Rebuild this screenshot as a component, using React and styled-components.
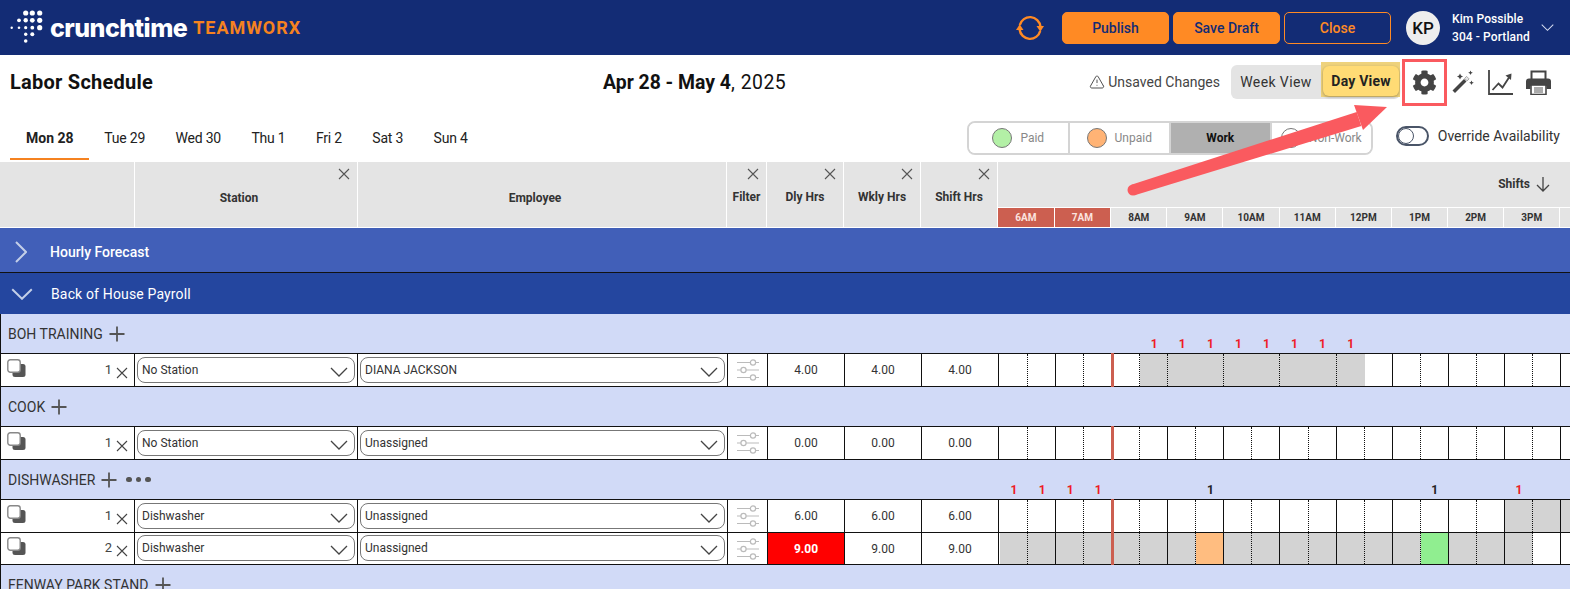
import React from 'react';
import styled, { createGlobalStyle } from 'styled-components';
import { FaCog } from 'react-icons/fa';
import { TriangleAlert } from 'lucide-react';

const GlobalStyle = createGlobalStyle`
  html, body {
    margin: 0;
    height: 589px;
    overflow: hidden;
    background: #fff;
    font-family: Roboto, "Liberation Sans", sans-serif;
  }
  * {
    box-sizing: border-box;
  }
`;

const Page = styled.div`
  position: relative;
  width: 1570px;
  height: 589px;
  overflow: hidden;
`;

const TopBar = styled.header`
  display: flex;
  align-items: center;
  height: 55px;
  background: #132c75;
  padding-left: 10px;
`;

const LogoWord = styled.span`
  margin-left: 4px;
  color: #fff;
  font-family: Inter, sans-serif;
  font-size: 25px;
  font-weight: 800;
  letter-spacing: -0.55px;
  line-height: 30px;
`;

const LogoProduct = styled.span`
  margin-left: 6px;
  color: #f58220;
  font-size: 18px;
  font-weight: 700;
  letter-spacing: 0.95px;
`;

const TopActions = styled.div`
  display: flex;
  align-items: center;
  margin-left: auto;
  padding-right: 16px;
`;

const SyncButton = styled.div`
  display: flex;
  margin-right: 14px;
`;

const ActionButton = styled.button`
  width: 107px;
  height: 32px;
  margin-left: 4px;
  border: 1px solid #ff8a24;
  border-radius: 5px;
  background: ${props => (props.$outline ? 'transparent' : '#ff8a24')};
  color: ${props => (props.$outline ? '#ff8a24' : '#132c75')};
  font-family: inherit;
  font-size: 14px;
  font-weight: 500;
`;

const Avatar = styled.div`
  display: flex;
  align-items: center;
  justify-content: center;
  width: 34px;
  height: 34px;
  margin-left: 15px;
  border-radius: 50%;
  background: #eee;
  color: #111;
  font-size: 17px;
  font-weight: 500;
`;

const UserText = styled.div`
  margin-left: 12px;
  width: 89px;
  color: #fff;
  font-size: 12px;
  font-weight: 500;
  letter-spacing: 0.1px;
  line-height: 18px;
`;

const TitleBar = styled.div`
  display: flex;
  align-items: center;
  height: 54px;
  padding: 0 19px 0 10px;
`;

const PageTitle = styled.h1`
  width: 593px;
  margin: 0;
  color: #111;
  font-size: 20px;
  font-weight: 700;
  letter-spacing: 0.25px;
`;

const DateRange = styled.div`
  color: #111;
  font-size: 19.4px;
  font-weight: 400;
  letter-spacing: 0.5px;

  b {
    font-weight: 700;
    letter-spacing: 0;
  }
`;

const Toolbar = styled.div`
  display: flex;
  align-items: center;
  margin-left: auto;
  color: #444;
`;

const Unsaved = styled.div`
  display: flex;
  align-items: center;
  gap: 3px;
  margin-right: 11px;
  color: #444;
  font-size: 14px;
`;

const ViewSwitch = styled.div`
  display: flex;
  height: 34px;
  border-radius: 6px;
  background: #e4e4e4;
`;

const WeekButton = styled.div`
  display: flex;
  align-items: center;
  justify-content: center;
  width: 90px;
  color: #333;
  font-size: 14px;
  letter-spacing: 0.4px;
`;

const DayFrame = styled.div`
  align-self: flex-start;
  width: 79px;
  height: 35px;
  margin-top: -3px;
  padding: 4px 1px 1px 2px;
  background: #eed27c;
`;

const DayButton = styled.div`
  display: flex;
  align-items: center;
  justify-content: center;
  height: 100%;
  border-radius: 6px;
  background: #ffdb75;
  box-shadow: 0 1px 3px rgba(0, 0, 0, 0.3);
  color: #222;
  font-size: 14px;
  font-weight: 700;
  letter-spacing: 0.2px;
`;

const GearBox = styled.div`
  display: flex;
  align-items: center;
  justify-content: center;
  width: 45px;
  height: 47px;
  margin-left: 2px;
  border: 3px solid #fa5a5f;
`;

const ToolIcon = styled.div`
  display: flex;
  margin-left: ${props => props.$gap}px;
`;

const TabBar = styled.div`
  display: flex;
  justify-content: space-between;
  height: 53px;
  padding: 8px 10px 0 10px;
`;

const Tabs = styled.nav`
  display: flex;
  height: 43px;
`;

const Tab = styled.div`
  display: flex;
  align-items: center;
  height: 43px;
  padding: ${props => (props.$active ? '0 15.5px 0 16px' : '0 15.2px')};
  border-bottom: 2px solid ${props => (props.$active ? '#f58220' : 'transparent')};
  color: #222;
  font-size: 14px;
  font-weight: ${props => (props.$active ? 700 : 400)};
  letter-spacing: ${props => (props.$active ? 0 : -0.2)}px;
`;

const FilterArea = styled.div`
  display: flex;
  align-items: flex-start;
  padding-top: 4px;
`;

const Legend = styled.div`
  display: flex;
  width: 406px;
  height: 34px;
  overflow: hidden;
  border: 2px solid #d4d4d4;
  border-radius: 8px;
`;

const LegendItem = styled.div`
  display: flex;
  flex: 1;
  align-items: center;
  justify-content: center;
  gap: 8px;
  border-right: 2px solid #d4d4d4;
  background: ${props => (props.$active ? '#b0b0b0' : '#fff')};
  color: ${props => (props.$active ? '#111' : '#888')};
  font-size: 12px;
  font-weight: ${props => (props.$active ? 700 : 400)};

  &:last-child {
    border-right: 0;
  }
`;

const LegendDot = styled.span`
  width: 20px;
  height: 20px;
  border: 1px solid #777;
  border-radius: 50%;
  background: ${props => props.$color};
`;

const OverrideToggle = styled.div`
  display: flex;
  align-items: center;
  margin: 5px 0 0 23px;
  color: #333;
  font-size: 14px;
`;

const ToggleTrack = styled.span`
  display: block;
  width: 33px;
  height: 20px;
  margin-right: 9px;
  border: 2px solid #4a5568;
  border-radius: 10px;
  background: #fff;
`;

const ToggleKnob = styled.span`
  display: block;
  width: 16px;
  height: 16px;
  border: 1.5px solid #4a5568;
  border-radius: 50%;
  background: #fff;
`;

const TableHead = styled.div`
  display: grid;
  grid-template-columns: 135px 223px 369px 40px 77px 77px 77px 1fr;
  height: 66px;
  border-bottom: 1px solid #fff;
  background: #e4e4e4;
`;

const HeadCell = styled.div`
  display: flex;
  flex-direction: column;
  align-items: center;
  border-right: 1px solid #fff;
`;

const HeadClose = styled.div`
  display: flex;
  align-self: flex-end;
  height: 12px;
  margin: 6px 7px 0 0;
`;

const HeadLabel = styled.div`
  margin-top: ${props => (props.$wide ? 11 : 10)}px;
  margin-right: ${props => (props.$wide ? 14 : 0)}px;
  color: #333;
  font-size: 12px;
  font-weight: 700;
  line-height: 14px;
  white-space: nowrap;
`;

const TimeHead = styled.div`
  display: flex;
  flex-direction: column;
  min-width: 0;
`;

const ShiftsLabel = styled.div`
  display: flex;
  align-items: center;
  justify-content: flex-end;
  gap: 6px;
  height: 45px;
  padding: 0 20px 2px 0;
  color: #333;
  font-size: 12px;
  font-weight: 700;
`;

const HourRow = styled.div`
  display: grid;
  grid-template-columns: 56.6px 56.6px repeat(9, 56.15px);
  height: 20px;
`;

const HourCell = styled.div`
  display: flex;
  align-items: center;
  justify-content: center;
  border-top: 1px solid #fff;
  border-right: 1px solid #fff;
  background: ${props => (props.$late ? '#cc5f50' : 'transparent')};
  color: ${props => (props.$late ? '#fbe3df' : '#333')};
  font-size: 10px;
  font-weight: 700;
`;

const SectionBar = styled.div`
  display: flex;
  align-items: center;
  height: ${props => (props.$open ? 41 : 45)}px;
  padding-left: ${props => (props.$open ? 11 : 15)}px;
  padding-top: ${props => (props.$open ? 0 : 3)}px;
  border-bottom: ${props => (props.$open ? 0 : '1px solid #111')};
  background: ${props => (props.$open ? '#24469f' : '#415fb8')};
  color: #fff;
  font-size: 14px;
  font-weight: ${props => (props.$open ? 400 : 500)};
  letter-spacing: ${props => (props.$open ? 0.15 : 0)}px;
`;

const SectionName = styled.span`
  margin-left: ${props => (props.$open ? 18 : 23)}px;
`;

const GroupRow = styled.div`
  display: grid;
  grid-template-columns: 999px 1fr;
  height: 39px;
  border-left: 1px solid #111;
  background: #d1daf7;
`;

const GroupName = styled.div`
  display: flex;
  align-items: center;
  gap: 6px;
  padding-left: 7px;
  color: #333;
  font-size: 14px;
`;

const GroupMore = styled.div`
  display: flex;
  gap: 4px;
  margin-left: 3px;
`;

const MoreDot = styled.span`
  width: 5.5px;
  height: 5.5px;
  border-radius: 50%;
  background: #555;
`;

const Timeline = styled.div`
  display: grid;
  grid-template-columns: repeat(21, 28.05px);
`;

const RowTimeline = styled(Timeline)`
  margin-left: 1px;
`;

const CountCell = styled.div`
  align-self: end;
  padding-bottom: 3px;
  color: ${props => (props.$over ? '#ee1c25' : '#222')};
  font-size: 12px;
  font-weight: 700;
  line-height: 12px;
  text-align: center;
`;

const ShiftRow = styled.div`
  display: grid;
  grid-template-columns: 135px 223px 370px 40px 77px 77px 77px 1fr;
  height: ${props => (props.$first ? 34 : 32)}px;
  border-top: ${props => (props.$first ? '1px solid #111' : 0)};
  border-bottom: 1px solid #111;
  background: #fff;
`;

const SeatCell = styled.div`
  display: flex;
  align-items: flex-start;
  padding: ${props => (props.$first ? 5 : 4)}px 6px 0 6px;
  border-left: 1px solid #111;
  border-right: 1px solid #111;
`;

const SeatNumber = styled.span`
  margin: 4px 4px 0 auto;
  color: #444;
  font-size: 13px;
  line-height: 14px;
`;

const SeatRemove = styled.span`
  display: flex;
  margin-top: 8px;
`;

const SelectCell = styled.div`
  padding: ${props => (props.$first ? 3 : 2)}px 2px 0;
  border-right: 1px solid #111;
`;

const SelectBox = styled.div`
  display: flex;
  align-items: center;
  justify-content: space-between;
  height: 26px;
  padding: 0 6px 0 4px;
  border: 1px solid #777;
  border-radius: 8px;
  color: #333;
  font-size: 12px;

  svg {
    margin-top: 3px;
  }
`;

const FilterCell = styled.div`
  display: flex;
  align-items: center;
  justify-content: center;
  border-right: 1px solid #111;
`;

const HoursCell = styled.div`
  display: flex;
  align-items: center;
  justify-content: center;
  border-right: 1px solid #111;
  background: ${props => (props.$alert ? '#ff0000' : 'transparent')};
  color: ${props => (props.$alert ? '#fff' : '#333')};
  font-size: 12px;
  font-weight: ${props => (props.$alert ? 700 : 400)};
`;

const fillColors = { grey: '#d3d3d3', orange: '#ffbd80', green: '#90ee90' };

const TimeCell = styled.div`
  position: relative;
  border-right: ${props => (props.$line === 'none' ? 0 : `1px ${props.$line} #111`)};
  background: ${props => fillColors[props.$fill] || 'transparent'};

  ${props => props.$now && `
    &::after {
      content: '';
      position: absolute;
      z-index: 1;
      top: -1px;
      right: -3px;
      bottom: -1px;
      width: 3px;
      background: #cc5f50;
    }
  `}
`;

const CalloutArrow = styled.svg`
  position: absolute;
  z-index: 2;
  top: 0;
  left: 0;
  pointer-events: none;
`;

const Close = ({ size = 12, color = '#555' }) => (
  <svg width={size} height={size} viewBox="0 0 12 12" fill="none" stroke={color} strokeWidth="1.1">
    <path d="M1 1l10 10M11 1L1 11" />
  </svg>
);

const Plus = () => (
  <svg width="16" height="16" viewBox="0 0 16 16" fill="none" stroke="#555" strokeWidth="1.8">
    <path d="M0.5 8h15M8 0.5v15" />
  </svg>
);

const ChevronDown = ({ width = 18, height = 10, color = '#444', weight = 1.3 }) => (
  <svg width={width} height={height} viewBox="0 0 18 10" fill="none" stroke={color} strokeWidth={weight} preserveAspectRatio="none">
    <path d="M1 1l8 8 8-8" />
  </svg>
);

const ChevronRight = () => (
  <svg width="12" height="22" viewBox="0 0 12 22" fill="none" stroke="#c3cfe8" strokeWidth="2">
    <path d="M1 1l10 10L1 21" />
  </svg>
);

const Logo = () => (
  <svg width="36" height="40" viewBox="0 0 36 40" fill="#fff">
    {[[15.7, 5, 2.6], [22.3, 5, 2.6], [29.7, 5, 2.6],
      [9, 12.3, 1.9], [15.7, 12.3, 2.2], [22.3, 12.3, 2.4], [29.7, 12.3, 2.6],
      [1.7, 19.7, 1.2], [9, 19.7, 1.3], [15.7, 19.7, 1.6], [22.3, 19.7, 1.9], [29.7, 19.7, 2.6],
      [15.7, 26.3, 1.7], [22.3, 26.3, 2],
      [15.7, 33, 1.8]].map(([cx, cy, r]) => (
        <circle key={`${cx}-${cy}`} cx={cx} cy={cy} r={r} />
    ))}
  </svg>
);

const SyncIcon = () => (
  <svg width="28" height="28" viewBox="0 0 28 28" fill="none" stroke="#ff8a24" strokeWidth="2.4">
    <path d="M3.8 11A10.500 10.500 0 0 1 24.400 12.500" />
    <path d="M24.200 17A10.500 10.500 0 0 1 3.600 15.500" />
    <path d="M0 16L3.700 10.200 7.500 16z" fill="#ff8a24" stroke="none" />
    <path d="M20.500 12L28 12 24.300 17.800z" fill="#ff8a24" stroke="none" />
  </svg>
);

const WandIcon = () => (
  <svg width="24" height="24" viewBox="0 0 24 24" fill="#444">
    <path d="M1.500 20.500L13 9l2.500 2.500L4 23z" />
    <path d="M13.600 8.400l2-2 2.500 2.500-2 2z" fill="#e4e4e4" stroke="#777" strokeWidth="0.6" />
    <path d="M9 3.500l1 2 2 1-2 1-1 2-1-2-2-1 2-1zM19.500 0.500l.7 1.600 1.600.7-1.600.7-.7 1.600-.7-1.600-1.600-.7 1.600-.7zM20.500 10.500l.7 1.600 1.600.7-1.600.7-.7 1.600-.7-1.600-1.600-.7 1.600-.7z" />
  </svg>
);

const ChartIcon = () => (
  <svg width="25" height="25" viewBox="0 0 25 25" fill="none" stroke="#444" strokeWidth="1.8">
    <path d="M1 0v24h24" />
    <path d="M4.500 20l6-6.500 4 4 6.500-10" />
    <path d="M17.500 5.500L23.500 3.500 23 10z" fill="#444" stroke="none" />
  </svg>
);

const PrintIcon = () => (
  <svg width="25" height="25" viewBox="0 0 25 25">
    <path d="M5.500 9V1.500h14V9" fill="#fff" stroke="#444" strokeWidth="2" />
    <path d="M3 8.500h19a3 3 0 0 1 3 3V19h-4.500v-3h-16v3H0v-7.500a3 3 0 0 1 3-3z" fill="#444" />
    <rect x="5" y="15" width="15" height="9.500" fill="#fff" stroke="#444" strokeWidth="1.600" />
    <path d="M8 18h9M8 20h9M8 22h9" stroke="#444" strokeWidth="0.9" />
  </svg>
);

const CopyIcon = () => (
  <svg width="19" height="19" viewBox="0 0 19 19">
    <rect x="5.500" y="5" width="13" height="13" rx="2.500" fill="#555" />
    <rect x="0.800" y="0.800" width="12.400" height="12.400" rx="2.500" fill="#fff" stroke="#888" strokeWidth="1.400" />
  </svg>
);

const SliderIcon = () => (
  <svg width="24" height="22" viewBox="0 0 24 22" fill="#fff" stroke="#bbb" strokeWidth="1.200">
    <path d="M1 3.500h22M1 11h22M1 18.500h22" />
    <circle cx="17" cy="3.500" r="2.600" />
    <circle cx="7.500" cy="11" r="2.600" />
    <circle cx="17" cy="18.500" r="2.600" />
  </svg>
);

const DownArrow = () => (
  <svg width="14" height="16" viewBox="0 0 14 16" fill="none" stroke="#444" strokeWidth="1.300">
    <path d="M7 1v14M1 9l6 6 6-6" />
  </svg>
);

const days = ['Mon 28', 'Tue 29', 'Wed 30', 'Thu 1', 'Fri 2', 'Sat 3', 'Sun 4'];
const hours = ['6AM', '7AM', '8AM', '9AM', '10AM', '11AM', '12PM', '1PM', '2PM', '3PM', ''];
const HALF_HOURS = Array.from({ length: 21 }, (_, i) => i);

const range = (from, to, name) => {
  const out = {};
  for (let i = from; i <= to; i += 1) out[i] = name;
  return out;
};

const groups = [
  {
    name: 'BOH TRAINING',
    counts: { 5: 1, 6: 1, 7: 1, 8: 1, 9: 1, 10: 1, 11: 1, 12: 1 },
    rows: [{
      num: 1,
      station: 'No Station',
      employee: 'DIANA JACKSON',
      hrs: ['4.00', '4.00', '4.00'],
      fills: range(5, 12, 'grey'),
      merged: true,
    }],
  },
  {
    name: 'COOK',
    counts: {},
    rows: [{
      num: 1,
      station: 'No Station',
      employee: 'Unassigned',
      hrs: ['0.00', '0.00', '0.00'],
      fills: {},
    }],
  },
  {
    name: 'DISHWASHER',
    more: true,
    counts: { 0: 1, 1: 1, 2: 1, 3: 1, 18: 1 },
    okCounts: { 7: 1, 15: 1 },
    rows: [
      {
        num: 1,
        station: 'Dishwasher',
        employee: 'Unassigned',
        hrs: ['6.00', '6.00', '6.00'],
        fills: range(18, 20, 'grey'),
      },
      {
        num: 2,
        station: 'Dishwasher',
        employee: 'Unassigned',
        hrs: ['9.00', '9.00', '9.00'],
        alert: true,
        fills: { ...range(0, 18, 'grey'), 7: 'orange', 15: 'green' },
      },
    ],
  },
  { name: 'FENWAY PARK STAND', counts: {}, rows: [] },
];

const lineFor = (i, row) => {
  if (row.merged && i >= 5 && i <= 12) return i % 2 === 0 ? 'none' : 'dotted';
  return i % 2 === 0 ? 'dotted' : 'solid';
};

const Shift = ({ row, first }) => (
  <ShiftRow $first={first}>
    <SeatCell $first={first}>
      <CopyIcon />
      <SeatNumber>{row.num}</SeatNumber>
      <SeatRemove><Close color="#444" /></SeatRemove>
    </SeatCell>
    <SelectCell $first={first}>
      <SelectBox>{row.station}<ChevronDown /></SelectBox>
    </SelectCell>
    <SelectCell $first={first}>
      <SelectBox>{row.employee}<ChevronDown /></SelectBox>
    </SelectCell>
    <FilterCell><SliderIcon /></FilterCell>
    <HoursCell $alert={row.alert}>{row.hrs[0]}</HoursCell>
    <HoursCell>{row.hrs[1]}</HoursCell>
    <HoursCell>{row.hrs[2]}</HoursCell>
    <RowTimeline>
      {HALF_HOURS.map(i => (
        <TimeCell key={i} $line={lineFor(i, row)} $fill={row.fills[i]} $now={i === 3} />
      ))}
    </RowTimeline>
  </ShiftRow>
);

const Group = ({ group }) => (
  <>
    <GroupRow>
      <GroupName>
        {group.name}
        <Plus />
        {group.more && (
          <GroupMore><MoreDot /><MoreDot /><MoreDot /></GroupMore>
        )}
      </GroupName>
      <Timeline>
        {HALF_HOURS.map(i => {
          const over = group.counts[i];
          const ok = group.okCounts && group.okCounts[i];
          return <CountCell key={i} $over={!!over}>{over || ok || ''}</CountCell>;
        })}
      </Timeline>
    </GroupRow>
    {group.rows.map((row, index) => (
      <Shift key={row.num} row={row} first={index === 0} />
    ))}
  </>
);

const headColumns = [
  { label: 'Station', close: true, wide: true },
  { label: 'Employee', wide: true },
  { label: 'Filter', close: true },
  { label: 'Dly Hrs', close: true },
  { label: 'Wkly Hrs', close: true },
  { label: 'Shift Hrs', close: true },
];

const App = () => (
  <Page>
    <GlobalStyle />
    <TopBar>
      <Logo />
      <LogoWord>crunchtime</LogoWord>
      <LogoProduct>TEAMWORX</LogoProduct>
      <TopActions>
        <SyncButton><SyncIcon /></SyncButton>
        <ActionButton>Publish</ActionButton>
        <ActionButton>Save Draft</ActionButton>
        <ActionButton $outline>Close</ActionButton>
        <Avatar>KP</Avatar>
        <UserText>Kim Possible<br />304 - Portland</UserText>
        <ChevronDown width={13} height={7} color="#d5dcf0" weight={1.4} />
      </TopActions>
    </TopBar>

    <TitleBar>
      <PageTitle>Labor Schedule</PageTitle>
      <DateRange><b>Apr 28 - May 4</b>, 2025</DateRange>
      <Toolbar>
        <Unsaved><TriangleAlert size={16} strokeWidth={1.4} />Unsaved Changes</Unsaved>
        <ViewSwitch>
          <WeekButton>Week View</WeekButton>
          <DayFrame><DayButton>Day View</DayButton></DayFrame>
        </ViewSwitch>
        <GearBox><FaCog size={25} color="#444" /></GearBox>
        <ToolIcon $gap={4}><WandIcon /></ToolIcon>
        <ToolIcon $gap={13}><ChartIcon /></ToolIcon>
        <ToolIcon $gap={13}><PrintIcon /></ToolIcon>
      </Toolbar>
    </TitleBar>

    <TabBar>
      <Tabs>
        {days.map((day, i) => <Tab key={day} $active={i === 0}>{day}</Tab>)}
      </Tabs>
      <FilterArea>
        <Legend>
          <LegendItem><LegendDot $color="#b3f0a6" />Paid</LegendItem>
          <LegendItem><LegendDot $color="#ffb375" />Unpaid</LegendItem>
          <LegendItem $active>Work</LegendItem>
          <LegendItem><LegendDot $color="#fff" />Non-Work</LegendItem>
        </Legend>
        <OverrideToggle>
          <ToggleTrack><ToggleKnob /></ToggleTrack>
          Override Availability
        </OverrideToggle>
      </FilterArea>
    </TabBar>

    <TableHead>
      <HeadCell />
      {headColumns.map(col => (
        <HeadCell key={col.label}>
          <HeadClose>{col.close && <Close />}</HeadClose>
          <HeadLabel $wide={col.wide}>{col.label}</HeadLabel>
        </HeadCell>
      ))}
      <TimeHead>
        <ShiftsLabel>Shifts <DownArrow /></ShiftsLabel>
        <HourRow>
          {hours.map((hour, i) => <HourCell key={hour || i} $late={i < 2}>{hour}</HourCell>)}
        </HourRow>
      </TimeHead>
    </TableHead>

    <SectionBar>
      <ChevronRight />
      <SectionName>Hourly Forecast</SectionName>
    </SectionBar>
    <SectionBar $open>
      <ChevronDown width={22} height={12} color="#c3cfe8" weight={1.6} />
      <SectionName $open>Back of House Payroll</SectionName>
    </SectionBar>

    {groups.map(group => <Group key={group.name} group={group} />)}

    <CalloutArrow width="1570" height="589" viewBox="0 0 1570 589">
      <circle cx="1133" cy="190" r="5.5" fill="#fa5a5f" />
      <path d="M1131.300 184.800L1356.700 111.900L1361.300 126.100L1134.700 195.200z" fill="#fa5a5f" />
      <path d="M1354 105L1387 107L1363 130z" fill="#fa5a5f" />
    </CalloutArrow>
  </Page>
);

export default App;
